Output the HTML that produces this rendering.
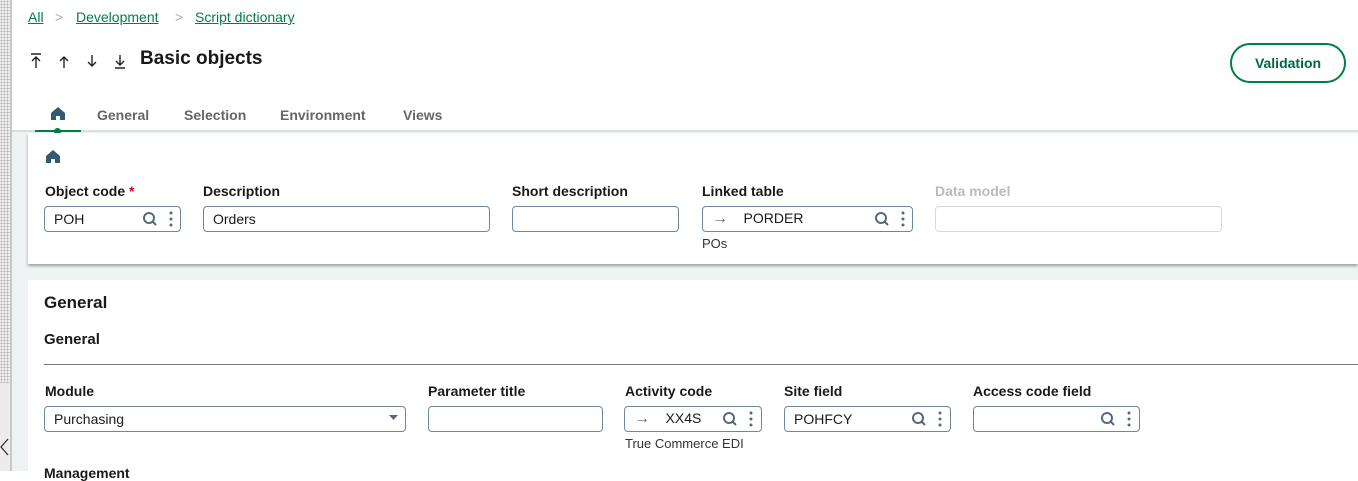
<!DOCTYPE html>
<html><head><style>
*{box-sizing:border-box;margin:0;padding:0}
body{width:1358px;height:471px;overflow:hidden;background:#fff;font-family:"Liberation Sans",sans-serif;color:#191919;position:relative}
.a{position:absolute}
.strip{left:0;top:0;width:10px;height:383px;background-image:radial-gradient(#b0b0b0 0.8px,transparent 0.9px);background-size:3px 3px;background-color:#f0f0f0}
.strip2{left:0;top:383px;width:10px;height:88px;background:#ececec}
.sb{left:10px;top:0;width:2px;height:471px;background:#c8c8c8}
.lnk{color:#007e45;text-decoration:underline;font-size:14px}
.chev{color:#aaa;font-size:14px}
.tab{font-size:14px;font-weight:bold;color:#666;top:107px}
.lbl{font-size:14px;font-weight:bold;color:#191919}
.inp{height:26px;border:1px solid #6f8799;border-radius:4px;background:#fff;font-size:14px;padding:4px 9px;color:#191919}
.sub{font-size:13px;color:#333}
.arr{color:#556b7a;font-size:16px}
</style></head><body>
<div class="a strip"></div><div class="a strip2"></div><div class="a sb"></div>
<div class="a" style="left:12px;top:132px;width:1346px;height:339px;background:#eff2f3"></div>
<div class="a" style="left:12px;top:130px;width:1346px;height:2px;background:#d9dee2"></div>

<div class="a" style="left:28px;top:9px"><span class="lnk">All</span></div>
<div class="a chev" style="left:55px;top:9px">&gt;</div>
<div class="a" style="left:76px;top:9px"><span class="lnk">Development</span></div>
<div class="a chev" style="left:175px;top:9px">&gt;</div>
<div class="a" style="left:195px;top:9px"><span class="lnk">Script dictionary</span></div>

<svg class="a" style="left:28px;top:52px" width="100" height="18" fill="none" stroke="#222" stroke-width="1.4">
<path d="M3 2h10M8 16V5M4 9l4-4 4 4"/>
<path d="M36 16V5M32 9l4-4 4 4"/>
<path d="M64 3v11M60 10l4 4 4-4"/>
<path d="M92 3v10M88 9l4 4 4-4M87 16h10"/>
</svg>
<div class="a" style="left:140px;top:48px;font-size:19px;font-weight:bold">Basic objects</div>

<div class="a" style="left:1230px;top:43px;width:116px;height:40px;border:2px solid #007e45;border-radius:20px;text-align:center;line-height:36px;font-size:14px;font-weight:bold;color:#00664a">Validation</div>

<svg class="a" style="left:50px;top:106px" width="16" height="15"><path d="M1 7L8 1l7 6v7h-5v-4H6v4H1z" fill="#335b70"/></svg>
<div class="a" style="left:35px;top:130px;width:46px;height:2px;background:#007e45"></div>
<div class="a" style="left:54px;top:128px;width:7px;height:7px;border-radius:50%;background:#007e45"></div>
<div class="a tab" style="left:97px">General</div>
<div class="a tab" style="left:184px">Selection</div>
<div class="a tab" style="left:280px">Environment</div>
<div class="a tab" style="left:403px">Views</div>

<div class="a" style="left:28px;top:133px;width:1330px;height:131px;background:#fff;box-shadow:0 2px 3px rgba(0,0,0,.35)"></div>
<svg class="a" style="left:45px;top:149px" width="16" height="15"><path d="M1 7L8 1l7 6v7h-5v-4H6v4H1z" fill="#335b70"/></svg>

<div class="a lbl" style="left:45px;top:183px">Object code <span style="color:#d0021b">*</span></div>
<div class="a inp" style="left:44px;top:206px;width:137px">POH</div>
<div class="a lbl" style="left:203px;top:183px">Description</div>
<div class="a inp" style="left:203px;top:206px;width:287px">Orders</div>
<div class="a lbl" style="left:512px;top:183px">Short description</div>
<div class="a inp" style="left:512px;top:206px;width:167px"></div>
<div class="a lbl" style="left:702px;top:183px">Linked table</div>
<div class="a inp" style="left:702px;top:206px;width:211px;padding-top:3px"><span class="arr">→</span>&nbsp;&nbsp;&nbsp;&nbsp;PORDER</div>
<div class="a sub" style="left:702px;top:236px">POs</div>
<div class="a lbl" style="left:935px;top:183px;color:#bbb">Data model</div>
<div class="a inp" style="left:935px;top:206px;width:287px;border-color:#d5d9dc"></div>

<div class="a" style="left:28px;top:280px;width:1330px;height:191px;background:#fff"></div>
<div class="a" style="left:44px;top:293px;font-size:17px;font-weight:bold">General</div>
<div class="a" style="left:44px;top:331px;font-size:15px;font-weight:bold">General</div>
<div class="a" style="left:44px;top:364px;width:1314px;height:1px;background:#777"></div>

<div class="a lbl" style="left:45px;top:383px">Module</div>
<div class="a inp" style="left:44px;top:406px;width:362px">Purchasing</div>
<svg class="a" style="left:389px;top:415px" width="10" height="6"><path d="M0 0h9L4.5 5z" fill="#556b7a"/></svg>
<div class="a lbl" style="left:428px;top:383px">Parameter title</div>
<div class="a inp" style="left:428px;top:406px;width:175px"></div>
<div class="a lbl" style="left:625px;top:383px">Activity code</div>
<div class="a inp" style="left:624px;top:406px;width:138px;padding-top:3px"><span class="arr">→</span>&nbsp;&nbsp;&nbsp;&nbsp;XX4S</div>
<div class="a sub" style="left:625px;top:436px">True Commerce EDI</div>
<div class="a lbl" style="left:784px;top:383px">Site field</div>
<div class="a inp" style="left:784px;top:406px;width:167px">POHFCY</div>
<div class="a lbl" style="left:973px;top:383px">Access code field</div>
<div class="a inp" style="left:973px;top:406px;width:167px"></div>
<div class="a" style="left:44px;top:465px;font-size:14px;font-weight:bold">Management</div>
<svg class="a" style="left:0;top:438px" width="10" height="18" fill="none" stroke="#333" stroke-width="1.3"><path d="M8 1L1 9l7 8"/></svg>

<svg class="a" style="left:0;top:0" width="1358" height="471" fill="none" stroke="#556b7a" stroke-width="2">
<circle cx="149" cy="218" r="5"/><path d="M153 222l3 3"/>
<g fill="#556b7a" stroke="none"><circle cx="171" cy="213" r="1.5"/><circle cx="171" cy="219" r="1.5"/><circle cx="171" cy="225" r="1.5"/></g>
<circle cx="881" cy="218" r="5"/><path d="M885 222l3 3"/>
<g fill="#556b7a" stroke="none"><circle cx="903" cy="213" r="1.5"/><circle cx="903" cy="219" r="1.5"/><circle cx="903" cy="225" r="1.5"/></g>
<circle cx="729" cy="418" r="5"/><path d="M733 422l3 3"/>
<g fill="#556b7a" stroke="none"><circle cx="751" cy="413" r="1.5"/><circle cx="751" cy="419" r="1.5"/><circle cx="751" cy="425" r="1.5"/></g>
<circle cx="918" cy="418" r="5"/><path d="M922 422l3 3"/>
<g fill="#556b7a" stroke="none"><circle cx="940" cy="413" r="1.5"/><circle cx="940" cy="419" r="1.5"/><circle cx="940" cy="425" r="1.5"/></g>
<circle cx="1107" cy="418" r="5"/><path d="M1111 422l3 3"/>
<g fill="#556b7a" stroke="none"><circle cx="1129" cy="413" r="1.5"/><circle cx="1129" cy="419" r="1.5"/><circle cx="1129" cy="425" r="1.5"/></g>
</svg>
</body></html>
